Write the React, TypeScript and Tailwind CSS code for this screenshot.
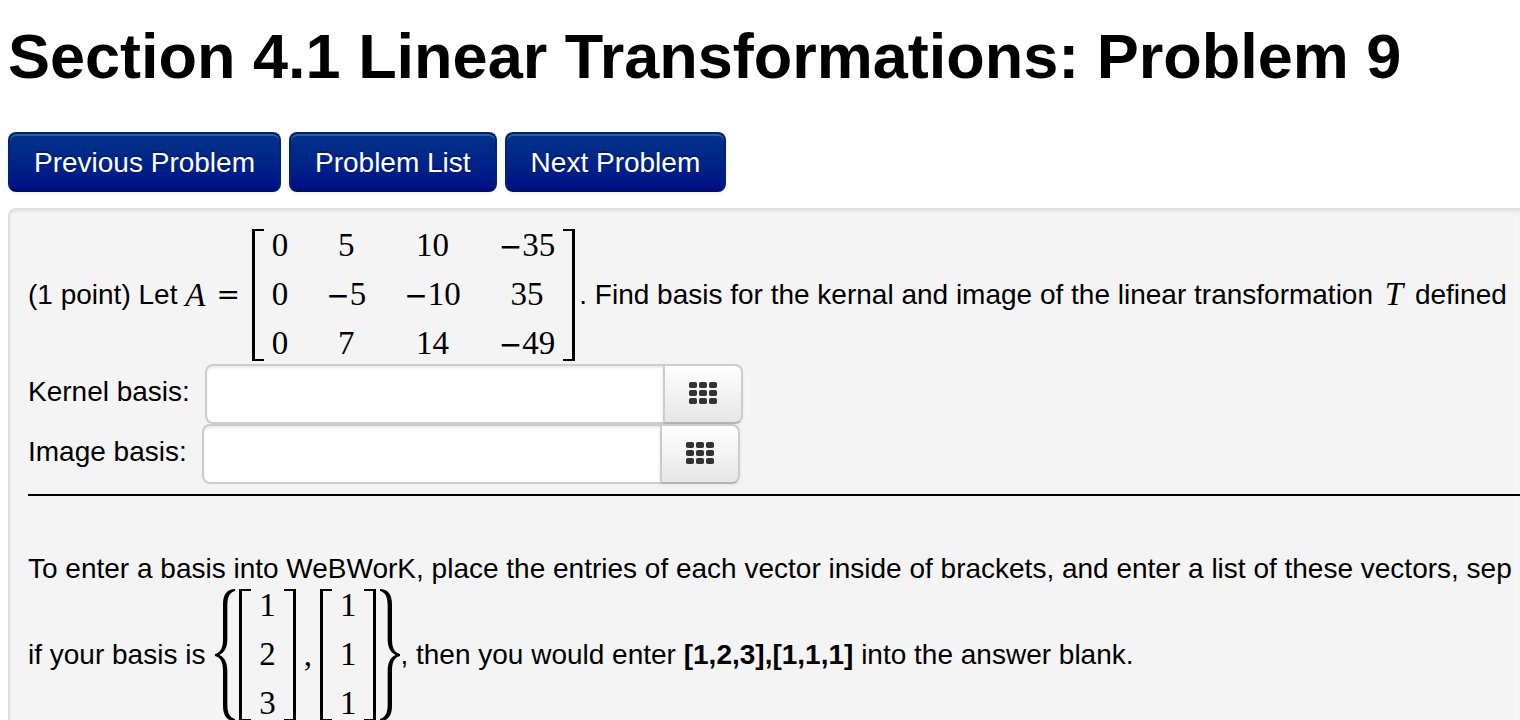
import type { ReactNode } from 'react';

const navLinks = ['Previous Problem', 'Problem List', 'Next Problem'];

const matrixA = [
  [0, 5, 10, -35],
  [0, -5, -10, 35],
  [0, 7, 14, -49],
];

function Op({ children }: { children: ReactNode }) {
  return <span className="font-['DejaVu_Sans',sans-serif] text-[28px]">{children}</span>;
}

function Variable({ children }: { children: ReactNode }) {
  return (
    <span className="font-['Liberation_Serif',serif] text-[33px] leading-[40px] italic">{children}</span>
  );
}

function Bracket({ right = false }: { right?: boolean }) {
  return (
    <span
      aria-hidden
      className={`w-3 self-stretch border-y-2 border-black ${right ? 'border-r-[3px]' : 'border-l-[3px]'}`}
    />
  );
}

function Brace({ right = false }: { right?: boolean }) {
  return (
    <svg viewBox="0 0 60 396" className={`h-[132px] w-5 shrink-0 ${right ? '-scale-x-100' : ''}`} aria-hidden>
      <path d="M60 0C38 0 24 14 24 46V150C24 176 18 190 0 195V201C18 206 24 220 24 246V350C24 382 38 396 60 396V390C46 386 37 376 37 346V246C37 222 30 206 13 198C30 190 37 174 37 150V50C37 20 46 10 60 6Z" />
    </svg>
  );
}

function Matrix({ rows }: { rows: number[][] }) {
  const columns = rows[0].map((_, c) => rows.map((row) => row[c]));
  return (
    <span className="flex h-[132px] shrink-0 items-center font-['Liberation_Serif',serif] text-[33px] leading-[33px]">
      <Bracket />
      <span className="flex gap-[38px] px-2 pb-0.5">
        {columns.map((column, c) => (
          <span key={c} className="flex flex-col items-center gap-4">
            {column.map((value, r) => (
              <span key={r} className="h-[33px]">
                {value < 0 && <Op>−</Op>}
                {Math.abs(value)}
              </span>
            ))}
          </span>
        ))}
      </span>
      <Bracket right />
    </span>
  );
}

function AnswerField({ id, label }: { id: string; label: string }) {
  return (
    <div className="flex items-center gap-[15px]">
      <label htmlFor={id} className="pb-1">
        {label}
      </label>
      <div className="flex">
        <input
          id={id}
          type="text"
          className="h-[60px] w-[460px] rounded-l-lg border-2 border-[#ccc] bg-white px-3 shadow-[inset_0_2px_2px_rgba(0,0,0,0.075)] outline-none"
        />
        <button
          type="button"
          aria-label={`Open equation editor for ${label}`}
          className="-ml-0.5 flex h-[60px] w-20 items-center justify-center rounded-r-lg border-2 border-[#ccc] border-b-[#b3b3b3] bg-linear-to-b from-white to-[#e6e6e6] pb-0.5 shadow-[inset_0_2px_0_rgba(255,255,255,0.2),0_2px_4px_rgba(0,0,0,0.05)]"
        >
          <svg viewBox="0 0 28 22" className="h-[22px] w-7 fill-[#333]" aria-hidden>
            {[0, 8, 16].map((y) =>
              [0, 10, 20].map((x) => <rect key={`${x}-${y}`} x={x} y={y} width="8" height="6" rx="1.8" />)
            )}
          </svg>
        </button>
      </div>
    </div>
  );
}

export default function App() {
  return (
    <div className="flex h-screen flex-col overflow-hidden bg-white pt-4 pl-2 font-['Liberation_Sans',Arial,sans-serif] text-[28px] leading-[40px] whitespace-nowrap text-black">
      <h1 className="text-[63px] leading-[80px] font-bold">Section 4.1 Linear Transformations: Problem 9</h1>

      <nav className="mt-9 flex gap-2" aria-label="Problem navigation">
        {navLinks.map((name) => (
          <a
            key={name}
            href="#"
            className="h-[60px] rounded-lg border-2 border-[#002277] border-b-[#001155] bg-linear-to-b from-[#003388] to-[#000d88] px-6 pt-[9px] text-white shadow-[inset_0_2px_0_rgba(255,255,255,0.2),0_2px_4px_rgba(0,0,0,0.05)] [text-shadow:0_-2px_0_rgba(0,0,0,0.25)]"
          >
            {name}
          </a>
        ))}
      </nav>

      <main className="mt-4 flex-1 rounded-tl-lg border-t-2 border-l-2 border-[#e0e0e0] bg-[#f4f4f4] pt-[18px] pl-[18px] shadow-[inset_0_2px_2px_rgba(0,0,0,0.05)]">
        <div className="flex items-center pt-px pb-[3px]">
          <span>(1 point) Let&nbsp;</span>
          <Variable>A</Variable>
          <span className="pr-3 pl-[11px]">
            <Op>=</Op>
          </span>
          <Matrix rows={matrixA} />
          <span className="pl-1">. Find basis for the kernal and image of the linear transformation&nbsp;</span>
          <span className="px-1">
            <Variable>T</Variable>
          </span>
          <span>&nbsp;defined</span>
        </div>

        <AnswerField id="kernel-basis" label="Kernel basis:" />
        <AnswerField id="image-basis" label="Image basis:" />

        <hr className="mt-[10px] border-t-2 border-black" />

        <p className="mt-[53px]">
          To enter a basis into WeBWorK, place the entries of each vector inside of brackets, and enter a list of
          these vectors, sep
        </p>

        <div className="flex items-center">
          <span className="pr-0.5">if your basis is&nbsp;</span>
          <Brace />
          <span className="flex items-center px-1">
            <Matrix rows={[[1], [2], [3]]} />
            <span className="px-2 font-['Liberation_Serif',serif] text-[33px]">,</span>
            <Matrix rows={[[1], [1], [1]]} />
          </span>
          <Brace right />
          <span>
            , then you would enter <b>[1,2,3],[1,1,1]</b> into the answer blank.
          </span>
        </div>
      </main>
    </div>
  );
}
